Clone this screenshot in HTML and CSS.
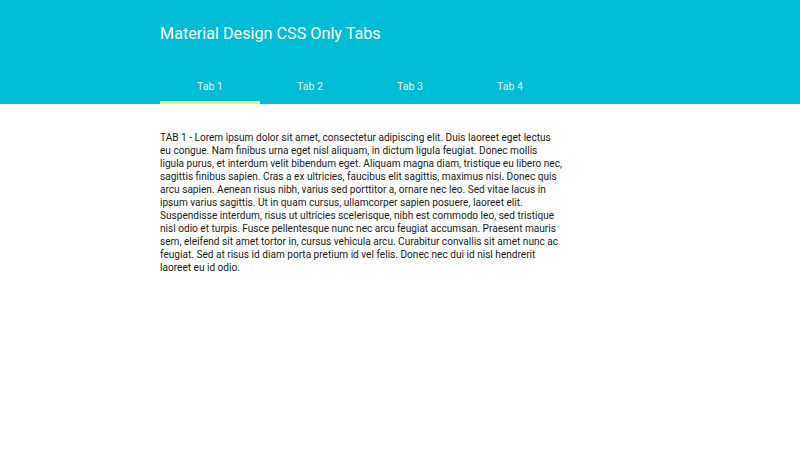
FILE: index.html
```html
<!DOCTYPE html>
<html lang="en">
<head>
  <meta charset="UTF-8" />
  <title>Material Design CSS Only Tabs</title>
  <link rel="stylesheet" href="styles.css">
</head>
<body>

  <div class="header">
    <h1>Material Design CSS Only Tabs</h1>

    <!-- Tabs -->
    <div class="tabs">
      <div class="tab active">Tab 1</div>
      <div class="tab">Tab 2</div>
      <div class="tab">Tab 3</div>
      <div class="tab">Tab 4</div>
    </div>
  </div>

  <div class="content">
    <p>TAB 1 - Lorem ipsum dolor sit amet, consectetur adipiscing elit. Duis laoreet eget lectus eu congue. Nam finibus urna eget nisl aliquam, in dictum ligula feugiat. Donec mollis ligula purus, et interdum velit bibendum eget. Aliquam magna diam, tristique eu libero nec, sagittis finibus sapien. Cras a ex ultricies, faucibus elit sagittis, maximus nisi. Donec quis arcu sapien. Aenean risus nibh, varius sed porttitor a, ornare nec leo. Sed vitae lacus in ipsum varius sagittis. Ut in quam cursus, ullamcorper sapien posuere, laoreet elit. Suspendisse interdum, risus ut ultricies scelerisque, nibh est commodo leo, sed tristique nisl odio et turpis. Fusce pellentesque nunc nec arcu feugiat accumsan. Praesent mauris sem, eleifend sit amet tortor in, cursus vehicula arcu. Curabitur convallis sit amet nunc ac feugiat. Sed at risus id diam porta pretium id vel felis. Donec nec dui id nisl hendrerit laoreet eu id odio.</p>
  </div>

</body>
</html>
```

FILE: styles.css
```css
body {
  font-family: Roboto, sans-serif;
  margin: 0;
  padding: 0;
  background: #fff;
}

.header {
  background: #00bcd4;
  padding: 0 0 0 160px;
  height: 104px;
  display: flex;
  flex-direction: column;
}

.header h1 {
  margin: 0;
  padding-top: 24px;
  font-size: 16.2px;
  font-weight: 400;
  color: #fff;
  line-height: 20px;
}

.tabs {
  display: flex;
  margin-top: auto;
}

.tab {
  width: 100px;
  text-align: center;
  color: rgba(255, 255, 255, 0.9);
  font-size: 10.5px;
  line-height: 13px;
  padding-bottom: 8px;
  border-bottom: 3px solid transparent;
}

.tab.active {
  border-bottom-color: #f4ee5e;
}

.content {
  padding: 27px 0 0 160px;
}

.content p {
  margin: 0;
  width: 402.5px;
  font-size: 10.1px;
  line-height: 13px;
  color: #1a1a1a;
}
```
